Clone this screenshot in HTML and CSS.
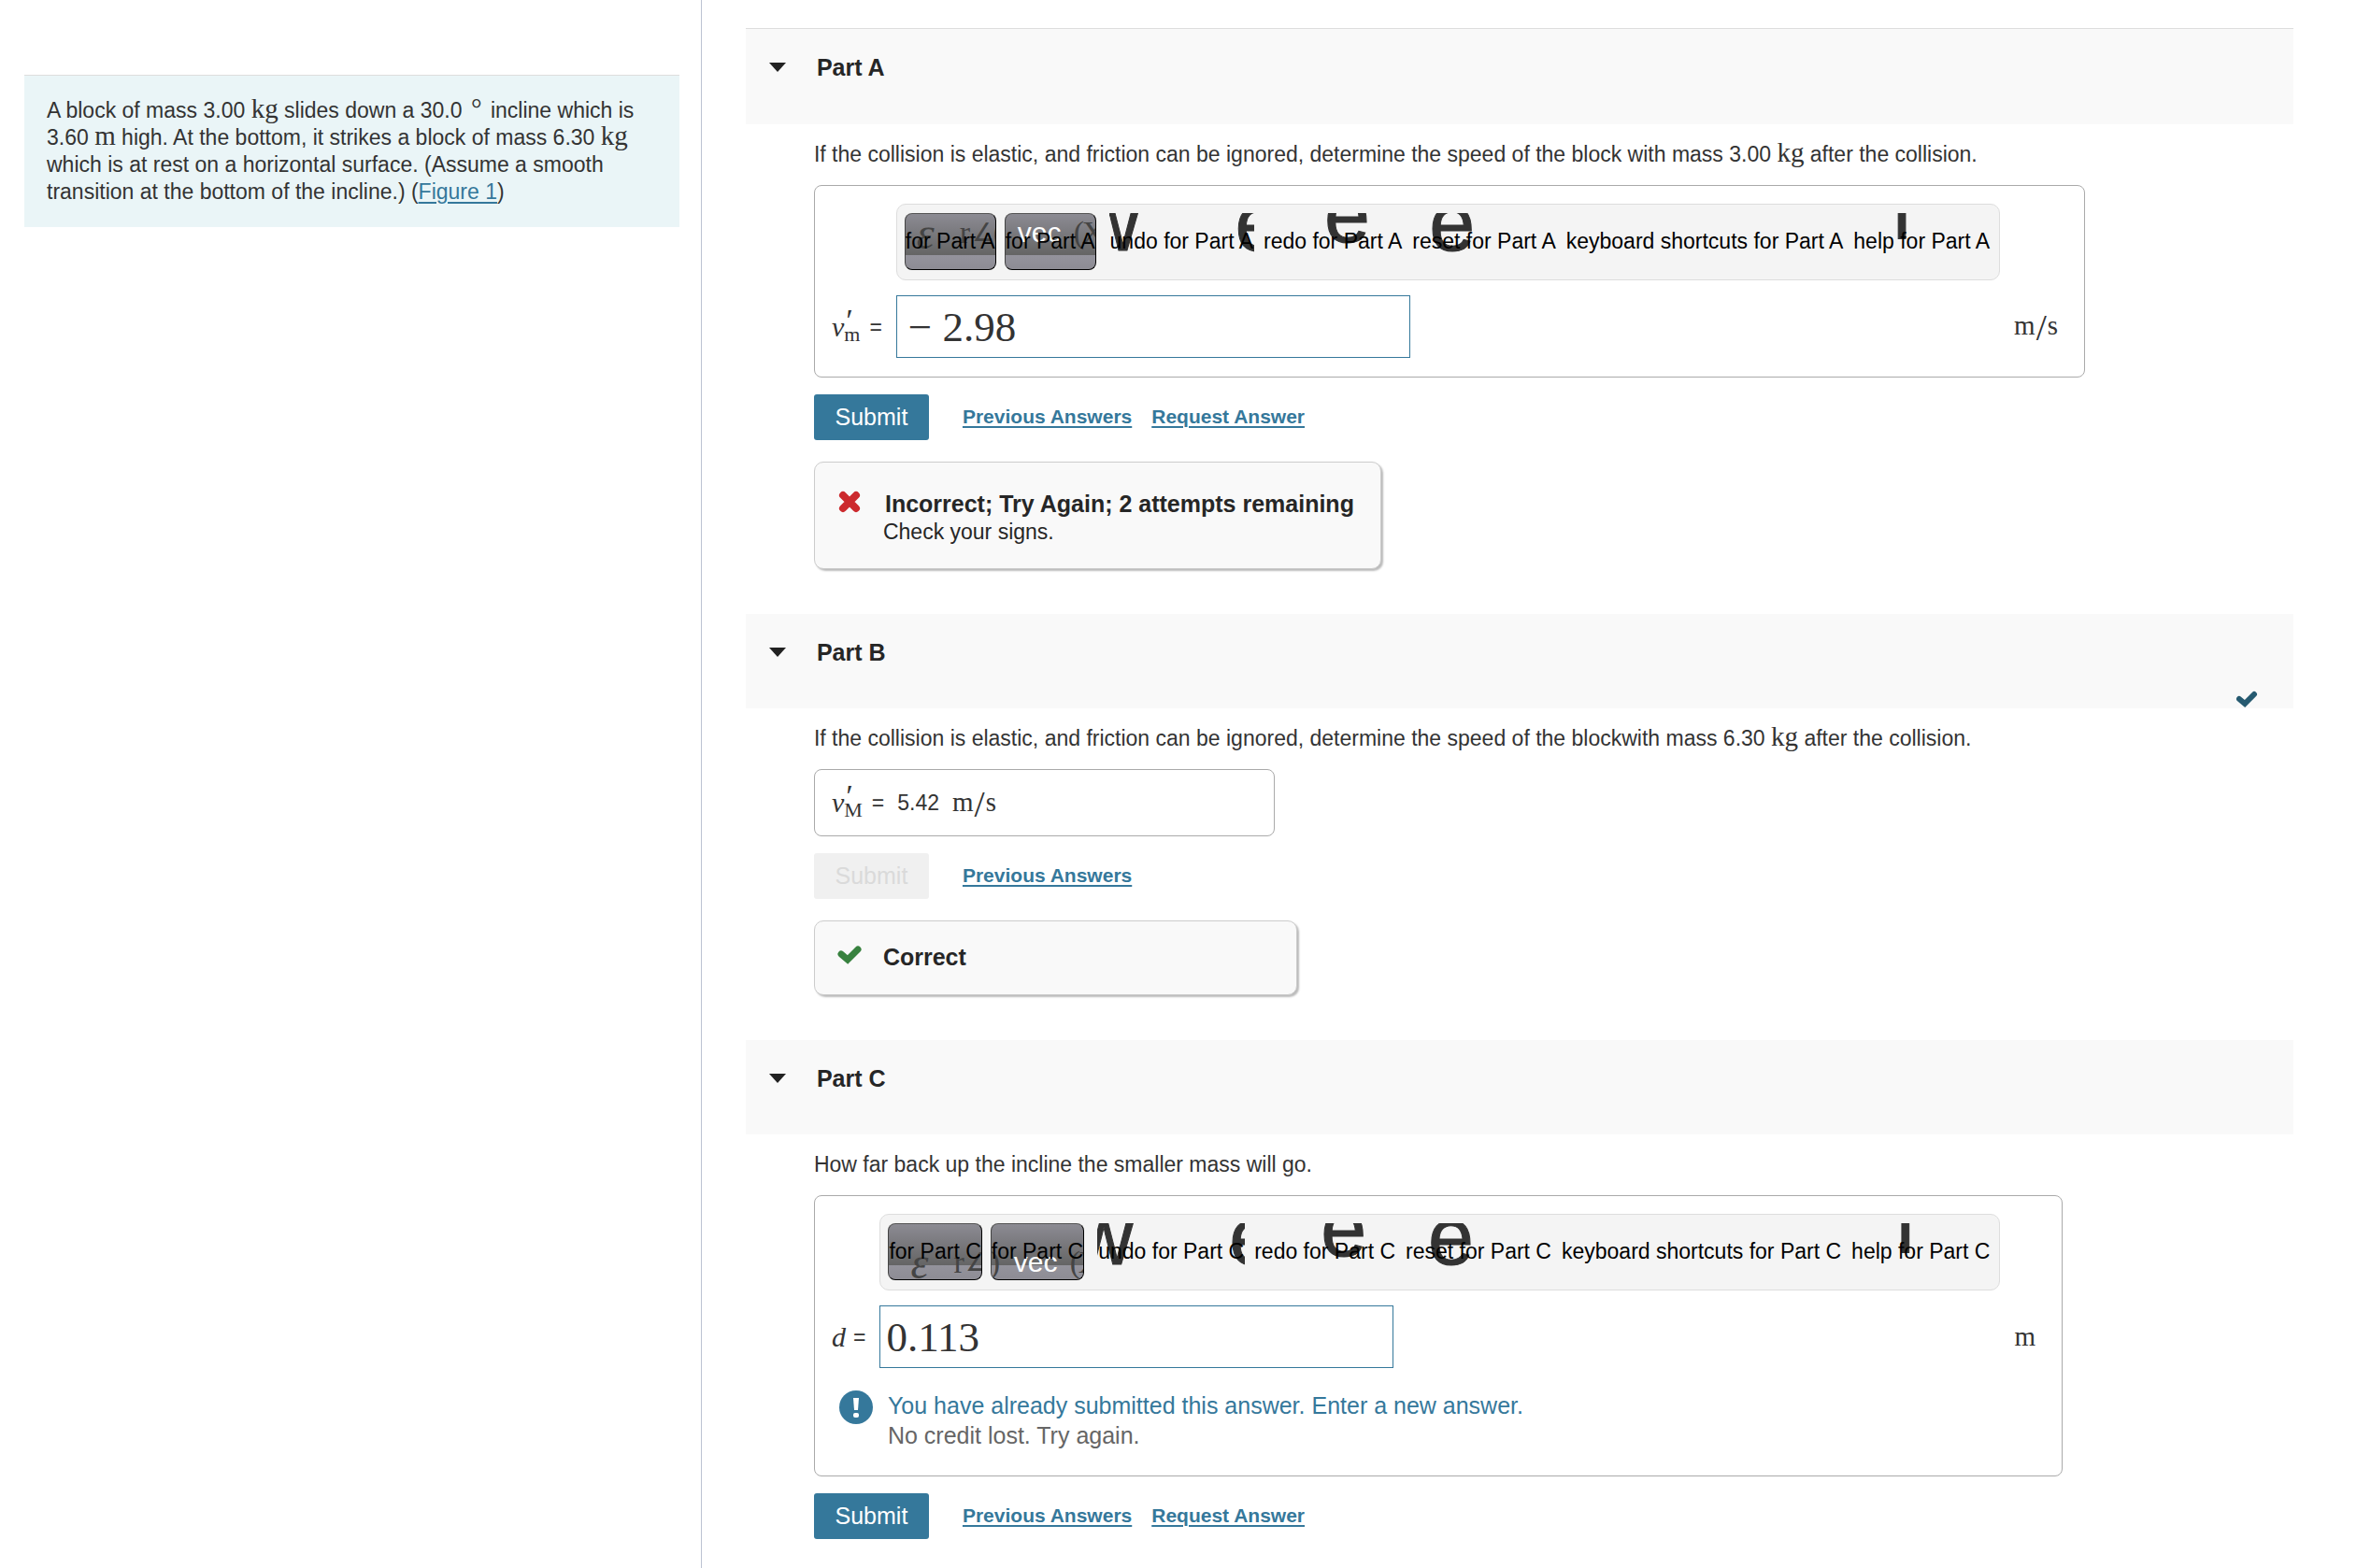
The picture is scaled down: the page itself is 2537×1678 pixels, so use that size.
FILE: index.html
```html
<!DOCTYPE html>
<html lang="en">
<head>
<meta charset="utf-8">
<meta name="viewport" content="width=device-width, initial-scale=1">
<title>Collision problem</title>
<link rel="stylesheet" href="styles.css">
</head>
<body>
<div class="page">
  <aside class="sidebar">
    <p class="problem">A block of mass 3.00 <span class="tex">kg</span> slides down a 30.0 <span class="tex degree">°</span> incline which is 3.60 <span class="tex">m</span> high. At the bottom, it strikes a block of mass 6.30 <span class="tex">kg</span> which is at rest on a horizontal surface. (Assume a smooth transition at the bottom of the incline.) (<a href="#figure1">Figure 1</a>)</p>
  </aside>

  <main class="content">
    <section class="part">
      <h2 class="part-header part-header-first">
        <button class="toggle" type="button"><svg class="caret" viewBox="0 0 20 12" aria-hidden="true"><path d="M1 1h18l-9 10z"/></svg>Part A</button>
      </h2>
      <div class="part-body">
        <p class="question">If the collision is elastic, and friction can be ignored, determine the speed of the block with mass 3.00 <span class="tex">kg</span> after the collision.</p>
        <div class="answer">
          <div class="toolbar">
            <button class="tool tool-dark" type="button"><span class="ghost g-eps">ε</span><span class="ghost g-r">r</span><span class="ghost g-angle">∠</span><span class="ghost g-open">(</span><span class="tool-text">for Part A</span></button>
            <button class="tool tool-dark" type="button"><span class="ghost g-close">)</span><span class="ghost g-vec">vec</span><span class="ghost g-paren">(</span><span class="ghost g-x">X</span><span class="tool-text">for Part A</span></button>
            <button class="tool tool-first" type="button"><span class="ghost g-w">w</span><span class="ghost g-undo">e</span><span class="tool-text">undo for Part A</span></button>
            <button class="tool" type="button"><span class="ghost g-redo">e</span><span class="tool-text">redo for Part A</span></button>
            <button class="tool" type="button"><span class="ghost g-reset">e</span><span class="tool-text">reset for Part A</span></button>
            <button class="tool" type="button"><span class="tool-text">keyboard shortcuts for Part A</span></button>
            <button class="tool" type="button"><span class="ghost g-help">l</span><span class="tool-text">help for Part A</span></button>
          </div>
          <label class="symbol" for="answer-a"><i>v</i><span class="scripts"><span class="prime">′</span><span class="sub">m</span></span><span class="equals">=</span></label>
          <input class="entry entry-signed" id="answer-a" type="text" value="− 2.98">
          <span class="tex result-unit">m<span class="slash">/</span>s</span>
        </div>
        <div class="actions">
          <button class="submit" type="button">Submit</button>
          <a href="#previous-a">Previous Answers</a>
          <a href="#request-a">Request Answer</a>
        </div>
        <div class="feedback feedback-wrong">
          <svg class="mark" viewBox="0 0 26 26" aria-hidden="true"><path d="M6 6l14 14M20 6L6 20" fill="none" stroke="#cc2a2e" stroke-width="8" stroke-linecap="round"/></svg>
          <div>
            <h3 class="verdict verdict-long">Incorrect; Try Again; 2 attempts remaining</h3>
            <p class="hint">Check your signs.</p>
          </div>
        </div>
      </div>
    </section>

    <section class="part">
      <h2 class="part-header">
        <button class="toggle" type="button"><svg class="caret" viewBox="0 0 20 12" aria-hidden="true"><path d="M1 1h18l-9 10z"/></svg>Part B</button>
        <svg class="done" viewBox="0 0 24 18" aria-hidden="true"><path d="M4 9l6 5L20 4" fill="none" stroke="#265a70" stroke-width="6" stroke-linecap="round"/></svg>
      </h2>
      <div class="part-body">
        <p class="question">If the collision is elastic, and friction can be ignored, determine the speed of the blockwith mass 6.30 <span class="tex">kg</span> after the collision.</p>
        <div class="answer answer-final">
          <span class="symbol"><i>v</i><span class="scripts"><span class="prime">′</span><span class="sub">M</span></span><span class="equals">=</span></span>
          <span class="final-value">5.42</span>
          <span class="tex">m<span class="slash">/</span>s</span>
        </div>
        <div class="actions">
          <button class="submit" type="button" disabled>Submit</button>
          <a href="#previous-b">Previous Answers</a>
        </div>
        <div class="feedback feedback-right">
          <svg class="mark" viewBox="0 0 26 26" aria-hidden="true"><path d="M4 12l7 6L22 7" fill="none" stroke="#38823f" stroke-width="7" stroke-linecap="round"/></svg>
          <h3 class="verdict">Correct</h3>
        </div>
      </div>
    </section>

    <section class="part">
      <h2 class="part-header">
        <button class="toggle" type="button"><svg class="caret" viewBox="0 0 20 12" aria-hidden="true"><path d="M1 1h18l-9 10z"/></svg>Part C</button>
      </h2>
      <div class="part-body">
        <p class="question">How far back up the incline the smaller mass will go.</p>
        <div class="answer">
          <div class="toolbar toolbar-low">
            <button class="tool tool-dark" type="button"><span class="ghost g-eps">ε</span><span class="ghost g-r">r</span><span class="ghost g-angle">∠</span><span class="ghost g-open">(</span><span class="tool-text">for Part C</span></button>
            <button class="tool tool-dark" type="button"><span class="ghost g-close">)</span><span class="ghost g-vec">vec</span><span class="ghost g-paren">(</span><span class="ghost g-x">X</span><span class="tool-text">for Part C</span></button>
            <button class="tool tool-first" type="button"><span class="ghost g-w">w</span><span class="ghost g-undo">e</span><span class="tool-text">undo for Part C</span></button>
            <button class="tool" type="button"><span class="ghost g-redo">e</span><span class="tool-text">redo for Part C</span></button>
            <button class="tool" type="button"><span class="ghost g-reset">e</span><span class="tool-text">reset for Part C</span></button>
            <button class="tool" type="button"><span class="tool-text">keyboard shortcuts for Part C</span></button>
            <button class="tool" type="button"><span class="ghost g-help">l</span><span class="tool-text">help for Part C</span></button>
          </div>
          <label class="symbol" for="answer-c"><i>d</i><span class="equals">=</span></label>
          <input class="entry" id="answer-c" type="text" value="0.113">
          <span class="tex result-unit">m</span>
          <div class="notice">
            <svg class="notice-icon" viewBox="0 0 36 36" aria-hidden="true"><circle cx="18" cy="18" r="18" fill="#35789b"/><path d="M15 8h6l-1 13h-4z" fill="#fff"/><rect x="15" y="24" width="6" height="5" rx="2" fill="#fff"/></svg>
            <div>
              <p class="notice-title">You have already submitted this answer. Enter a new answer.</p>
              <p>No credit lost. Try again.</p>
            </div>
          </div>
        </div>
        <div class="actions">
          <button class="submit" type="button">Submit</button>
          <a href="#previous-c">Previous Answers</a>
          <a href="#request-c">Request Answer</a>
        </div>
      </div>
    </section>
  </main>
</div>
</body>
</html>
```
FILE: styles.css
```css
* {
  box-sizing: border-box;
}

body {
  margin: 0;
  background: #fff;
  color: #333;
  font: 23px/29px "Liberation Sans", Arial, sans-serif;
}

h2, h3, p {
  margin: 0;
}

a {
  color: #35789b;
  text-decoration-thickness: 2px;
  text-underline-offset: 3px;
}

button {
  border: 0;
  font-family: inherit;
  cursor: pointer;
}

.page {
  display: flex;
  min-height: 100vh;
}

/* Problem statement */
.sidebar {
  flex: 0 0 29.6%;
  padding: 80px 23px 0 26px;
  border-right: 1px solid #bcc3d2;
}

.problem {
  padding: 23px 24px;
  border-top: 1px solid #ddd;
  background: #eaf5f7;
}

.tex {
  font-family: "Liberation Serif", "Times New Roman", serif;
  font-size: 29px;
  line-height: 25px;
}

.degree {
  margin: 0 3px;
}

.slash {
  margin: 0 1px;
  font-size: 40px;
  vertical-align: -6px;
}

/* Parts */
.content {
  flex: 1;
  min-width: 0;
  padding: 30px 83px 30px 47px;
}

.part + .part {
  margin-top: 48px;
}

.part-header {
  display: flex;
  justify-content: space-between;
  align-items: flex-start;
  height: 101px;
  padding: 24px 38px 1px 24px;
  background: #f9f9f9;
}

.part-header-first {
  height: 103px;
  border-top: 1px solid #ddd;
}

.toggle {
  display: flex;
  align-items: center;
  gap: 32px;
  padding: 0;
  background: none;
  color: #262626;
  font-size: 25px;
  font-weight: bold;
  line-height: 34px;
}

.caret {
  width: 20px;
  height: 12px;
  fill: #222;
}

.done {
  align-self: flex-end;
  width: 24px;
  height: 18px;
}

.part-body {
  display: flex;
  flex-direction: column;
  align-items: flex-start;
  padding: 18px 0 0 73px;
}

.question {
  height: 29px;
}

/* Answer box */
.answer {
  display: grid;
  grid-template-columns: auto auto auto;
  align-items: center;
  row-gap: 16px;
  margin-top: 18px;
  padding: 19px 28px 20px 18px;
  border: 1px solid #aaa;
  border-radius: 8px;
}

.answer-final {
  display: flex;
  gap: 14px;
  width: 493px;
  max-width: 100%;
  height: 72px;
  padding: 0 18px;
}

.symbol {
  grid-column: 1;
  display: flex;
  align-items: center;
  padding-right: 15px;
  line-height: 30px;
}

.answer-final .symbol {
  padding-right: 0;
}

.symbol i {
  font: italic 30px/30px "Liberation Serif", "Times New Roman", serif;
}

.scripts {
  display: grid;
  margin-right: 2px;
  padding-bottom: 4px;
  font-family: "Liberation Serif", "Times New Roman", serif;
}

.prime {
  font-size: 34px;
  font-style: italic;
  line-height: 26px;
}

.sub {
  margin-top: -6px;
  font-size: 22px;
  line-height: 16px;
}

.equals {
  margin-left: 8px;
}

.entry {
  width: 550px;
  height: 67px;
  margin: 0;
  padding: 0 6px;
  border: 1px solid #35789b;
  border-radius: 0;
  background: #fff;
  color: #333;
  font: 45px/60px "Liberation Serif", "Times New Roman", serif;
}

.entry-signed {
  padding-left: 12px;
}

.result-unit {
  margin-left: 15px;
}

/* Equation toolbar */
.toolbar {
  --drift-x: 0px;
  --drift-y: 0px;
  --sign-x: 0px;
  --sign-y: 0px;
  grid-column: 2;
  display: flex;
  gap: 9px;
  padding: 9px 9px 10px 8px;
  border: 1px solid #ddd;
  border-radius: 10px;
  background: #f4f4f4;
}

.toolbar-low {
  --drift-x: 6px;
  --drift-y: 4px;
  --sign-x: 11px;
  --sign-y: 21px;
}

.tool {
  position: relative;
  height: 61px;
  padding: 0 1px;
  overflow: hidden;
  background: none;
  color: #000;
  font-size: 23px;
  line-height: 29px;
  white-space: nowrap;
}

.tool-text {
  position: relative;
}

.tool-dark {
  padding: 0;
  border: 1px solid #000;
  border-top-color: #555;
  border-left-color: #444;
  border-radius: 8px;
  background: linear-gradient(#8c8b93, #656565 74%, #94939c 75%, #8d8c94);
}

.tool-first {
  margin-left: 5px;
}

/* Oversized symbols cut off by the edges of the tool buttons */
.ghost {
  position: absolute;
  top: calc(var(--drift-y) - 34px);
  color: #333;
  font-size: 88px;
  line-height: 88px;
  -webkit-text-stroke: 1px #333;
}

.g-w { left: calc(var(--drift-x) - 31px); }
.g-undo { left: calc(var(--drift-x) + 135px); }
.g-redo { left: calc(var(--drift-x) + 66px); top: calc(var(--drift-y) - 43px); }
.g-reset { left: calc(var(--drift-x) + 19px); }
.g-help { left: calc(var(--drift-x) + 43px); top: calc(var(--drift-y) - 47px); }

.tool-dark .ghost {
  top: calc(var(--sign-y) + 3px);
  color: #444;
  font: 34px/34px "Liberation Serif", "Times New Roman", serif;
  -webkit-text-stroke: 0;
}

.tool-dark .g-eps {
  left: calc(var(--sign-x) + 12px);
  top: calc(var(--sign-y) - 3px);
  font-size: 48px;
  font-style: italic;
  line-height: 48px;
}

.tool-dark .g-r { left: calc(var(--sign-x) + 58px); }
.tool-dark .g-angle { left: calc(var(--sign-x) + 71px); font-size: 27px; }
.tool-dark .g-open { left: calc(var(--sign-x) + 94px); }
.tool-dark .g-close { left: calc(var(--sign-x) - 13px); }

.tool-dark .g-vec {
  left: calc(var(--sign-x) + 13px);
  color: #fff;
  font: 30px/34px "Liberation Sans", Arial, sans-serif;
}

.tool-dark .g-paren { left: calc(var(--sign-x) + 73px); }
.tool-dark .g-x { left: calc(var(--sign-x) + 82px); }

/* Submit row */
.actions {
  display: flex;
  align-items: center;
  gap: 21px;
  margin-top: 18px;
  font-size: 21px;
  font-weight: bold;
}

.actions a {
  padding-bottom: 2px;
}

.submit {
  width: 123px;
  height: 49px;
  margin-right: 15px;
  padding: 0;
  border-radius: 3px;
  background: #35789b;
  color: #fff;
  font-size: 25px;
}

.submit:disabled {
  background: #f0f0f0;
  color: #dadada;
}

/* Feedback cards */
.feedback {
  display: flex;
  gap: 23px;
  margin-top: 23px;
  padding: 29px 28px 24px 24px;
  border: 1px solid #ccc;
  border-radius: 10px;
  background: #f9f9f9;
  box-shadow: 2px 2px 2px #bbb;
  color: #262626;
}

.feedback-wrong {
  min-height: 115px;
}

.feedback-right {
  width: 517px;
  max-width: 100%;
  min-height: 80px;
  padding-top: 23px;
}

.mark {
  flex: none;
  width: 26px;
  height: 26px;
}

.verdict {
  font-size: 25px;
  line-height: 31px;
}

.verdict-long {
  padding-left: 2px;
}

/* Resubmission notice */
.notice {
  grid-column: 1 / -1;
  display: flex;
  gap: 16px;
  margin: 8px 0 7px;
  padding-left: 8px;
  color: #666;
  font-size: 25px;
  line-height: 32px;
}

.notice-icon {
  flex: none;
  width: 36px;
  height: 36px;
}

.notice-title {
  color: #35789b;
}
```
